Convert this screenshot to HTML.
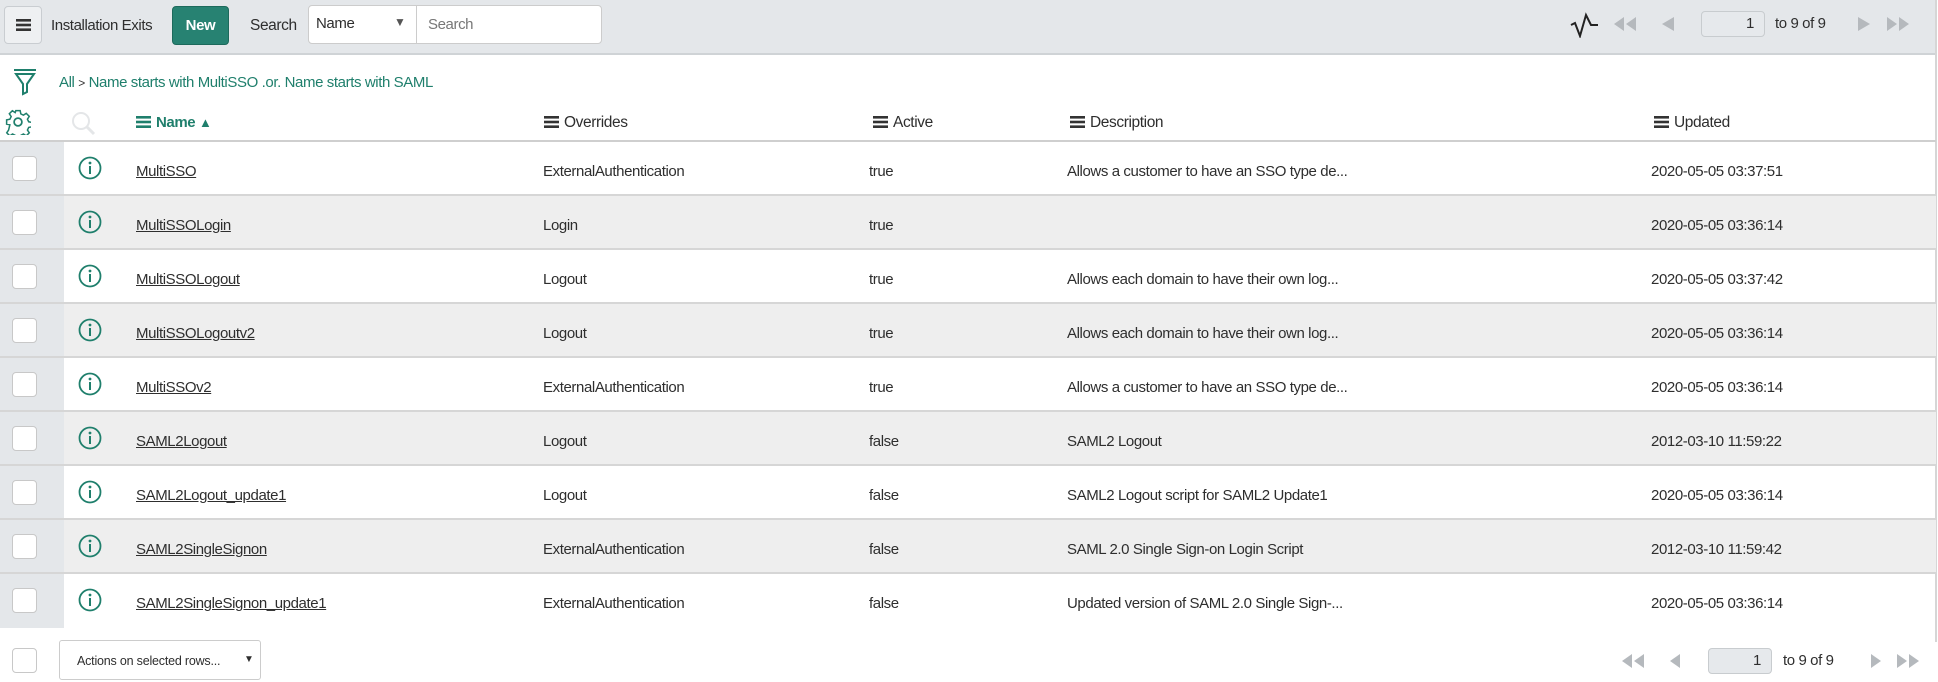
<!DOCTYPE html>
<html><head><meta charset="utf-8"><style>
*{box-sizing:border-box;margin:0;padding:0}
body{width:1938px;height:682px;overflow:hidden;background:#fff;font-family:"Liberation Sans",sans-serif;font-size:15px;letter-spacing:-0.4px;color:#2e2e2e;position:relative}
.a{position:absolute}
.hdr{left:0;top:0;width:1936px;height:55px;background:#e4e7ea;border-bottom:2px solid #cfd3d6}
.btn{border:1px solid #c9cdd1;border-radius:4px;background:#eef0f2}
.hs{display:inline-block;width:15px;height:12px;margin-right:5px;vertical-align:-1px}
.row{left:0;width:1936px;height:54px;border-bottom:2px solid #d6d6d6}
.row.g{background:#eeeeee}
.lc{left:0;top:0;width:64px;height:100%;background:#e4e7ea}
.cb{width:25px;height:25px;background:#fff;border:1px solid #c8c8c8;border-radius:4px}
.info{width:24px;height:24px}
.cell{top:21px;white-space:nowrap}
.lnk{text-decoration:underline;color:#2e2e2e}
.th{top:114px;font-size:15.5px;white-space:nowrap}
</style></head><body>
<svg width="0" height="0" style="position:absolute"><defs>
<symbol id="hb" viewBox="0 0 15 12"><rect x="0" y="0" width="15" height="2.6"/><rect x="0" y="4.7" width="15" height="2.6"/><rect x="0" y="9.4" width="15" height="2.6"/></symbol>
<symbol id="inf" viewBox="0 0 24 24"><circle cx="12" cy="12" r="10.5" fill="none" stroke="#1f7f6c" stroke-width="1.8"/><circle cx="12" cy="7" r="1.4" fill="#1f7f6c"/><rect x="11" y="10" width="2" height="8" fill="#1f7f6c"/></symbol>
</defs></svg>
<div class="a hdr"></div>
<div class="a btn" style="left:4px;top:6px;width:38px;height:38px"><svg class="a" style="left:11px;top:12px;fill:#333" width="15" height="12"><use href="#hb"/></svg></div>
<div class="a" style="left:51px;top:17px;font-size:15px">Installation Exits</div>
<div class="a" style="left:172px;top:6px;width:57px;height:39px;background:#278272;border:1px solid #1d6a5c;border-radius:4px;color:#fff;font-weight:bold;text-align:center;line-height:37px;font-size:15px">New</div>
<div class="a" style="left:250px;top:17px;font-size:15.5px">Search</div>
<div class="a" style="left:308px;top:5px;width:294px;height:39px;background:#fff;border:1px solid #ccc;border-radius:4px"></div>
<div class="a" style="left:416px;top:6px;width:1px;height:37px;background:#ccc"></div>
<div class="a" style="left:316px;top:15px;font-size:15px">Name</div>
<div class="a" style="left:394px;top:15px;font-size:12px;color:#555">▼</div>
<div class="a" style="left:428px;top:16px;font-size:15px;color:#777">Search</div>
<svg class="a" style="left:1570px;top:12px" width="30" height="26" viewBox="0 0 30 26"><path d="M1 13 L5 11 L10 24 L16 3 L21 13 L28 13" fill="none" stroke="#222" stroke-width="2"/></svg>
<svg class="a" style="left:1614px;top:16px" width="32" height="16"><path d="M0 8 L10 1 V15Z M12 8 L22 1 V15Z" fill="#b5b9bd"/></svg>
<svg class="a" style="left:1662px;top:16px" width="14" height="16"><path d="M0 8 L12 1 V15Z" fill="#b5b9bd"/></svg>
<div class="a" style="left:1701px;top:11px;width:64px;height:26px;border:1px solid #c8cccf;border-radius:4px;background:#e6e9ec;text-align:right;padding-right:10px;line-height:24px">1</div>
<div class="a" style="left:1775px;top:15px;font-size:15px">to 9 of 9</div>
<svg class="a" style="left:1857px;top:16px" width="14" height="16"><path d="M13 8 L1 1 V15Z" fill="#b5b9bd"/></svg>
<svg class="a" style="left:1887px;top:16px" width="32" height="16"><path d="M10 8 L0 1 V15Z M22 8 L12 1 V15Z" fill="#b5b9bd"/></svg>
<div class="a" style="left:1935px;top:0;width:2px;height:642px;background:#d6d6d6"></div>

<svg class="a" style="left:13px;top:68px" width="24" height="28" viewBox="0 0 24 28"><path d="M1 2 H23 M3 6 H21 L14 16 V24 L10 26 V16 Z" fill="none" stroke="#1f7f6c" stroke-width="2"/></svg>
<div class="a" style="left:59px;top:74px;color:#1f7f6c;font-size:15px">All <span style="color:#333;font-size:12px">&gt;</span> Name starts with MultiSSO .or. Name starts with SAML</div>

<svg class="a" style="left:5px;top:109px" width="26" height="26" viewBox="0 0 24 24"><circle cx="12" cy="12" r="3.6" fill="none" stroke="#1f7f6c" stroke-width="1.6"/><path d="M10 1.5h4l.6 3 2.4 1.2 2.6-1.7 2.8 2.8-1.7 2.6 1.2 2.4 3 .6v4l-3 .6-1.2 2.4 1.7 2.6-2.8 2.8-2.6-1.7-2.4 1.2-.6 3h-4l-.6-3-2.4-1.2-2.6 1.7-2.8-2.8 1.7-2.6L4.5 14.6 1.5 14v-4l3-.6L5.7 7 4 4.4 6.8 1.6 9.4 3.3 Z" fill="none" stroke="#1f7f6c" stroke-width="1.4"/></svg>
<svg class="a" style="left:70px;top:110px" width="26" height="26"><circle cx="11" cy="11" r="8" fill="none" stroke="#e4e6e8" stroke-width="2"/><path d="M17 17 L24 24" stroke="#e4e6e8" stroke-width="3"/></svg>
<div class="a th" style="left:136px;color:#1f7f6c;font-weight:bold;font-size:15px"><svg class="hs" style="fill:#1f7f6c"><use href="#hb"/></svg>Name <span style="font-size:13px">▲</span></div>
<div class="a th" style="left:544px"><svg class="hs" style="fill:#333"><use href="#hb"/></svg>Overrides</div>
<div class="a th" style="left:873px"><svg class="hs" style="fill:#333"><use href="#hb"/></svg>Active</div>
<div class="a th" style="left:1070px"><svg class="hs" style="fill:#333"><use href="#hb"/></svg>Description</div>
<div class="a th" style="left:1654px"><svg class="hs" style="fill:#333"><use href="#hb"/></svg>Updated</div>
<div class="a" style="left:0;top:140px;width:1936px;height:2px;background:#cfcfcf"></div>

<div class="a row" style="top:142px"><div class="a lc"></div><div class="a cb" style="left:12px;top:14px"></div><svg class="a info" style="left:78px;top:14px"><use href="#inf"/></svg><div class="a cell lnk" style="left:136px">MultiSSO</div><div class="a cell" style="left:543px">ExternalAuthentication</div><div class="a cell" style="left:869px">true</div><div class="a cell" style="left:1067px">Allows a customer to have an SSO type de...</div><div class="a cell" style="left:1651px">2020-05-05 03:37:51</div></div>
<div class="a row g" style="top:196px"><div class="a lc"></div><div class="a cb" style="left:12px;top:14px"></div><svg class="a info" style="left:78px;top:14px"><use href="#inf"/></svg><div class="a cell lnk" style="left:136px">MultiSSOLogin</div><div class="a cell" style="left:543px">Login</div><div class="a cell" style="left:869px">true</div><div class="a cell" style="left:1651px">2020-05-05 03:36:14</div></div>
<div class="a row" style="top:250px"><div class="a lc"></div><div class="a cb" style="left:12px;top:14px"></div><svg class="a info" style="left:78px;top:14px"><use href="#inf"/></svg><div class="a cell lnk" style="left:136px">MultiSSOLogout</div><div class="a cell" style="left:543px">Logout</div><div class="a cell" style="left:869px">true</div><div class="a cell" style="left:1067px">Allows each domain to have their own log...</div><div class="a cell" style="left:1651px">2020-05-05 03:37:42</div></div>
<div class="a row g" style="top:304px"><div class="a lc"></div><div class="a cb" style="left:12px;top:14px"></div><svg class="a info" style="left:78px;top:14px"><use href="#inf"/></svg><div class="a cell lnk" style="left:136px">MultiSSOLogoutv2</div><div class="a cell" style="left:543px">Logout</div><div class="a cell" style="left:869px">true</div><div class="a cell" style="left:1067px">Allows each domain to have their own log...</div><div class="a cell" style="left:1651px">2020-05-05 03:36:14</div></div>
<div class="a row" style="top:358px"><div class="a lc"></div><div class="a cb" style="left:12px;top:14px"></div><svg class="a info" style="left:78px;top:14px"><use href="#inf"/></svg><div class="a cell lnk" style="left:136px">MultiSSOv2</div><div class="a cell" style="left:543px">ExternalAuthentication</div><div class="a cell" style="left:869px">true</div><div class="a cell" style="left:1067px">Allows a customer to have an SSO type de...</div><div class="a cell" style="left:1651px">2020-05-05 03:36:14</div></div>
<div class="a row g" style="top:412px"><div class="a lc"></div><div class="a cb" style="left:12px;top:14px"></div><svg class="a info" style="left:78px;top:14px"><use href="#inf"/></svg><div class="a cell lnk" style="left:136px">SAML2Logout</div><div class="a cell" style="left:543px">Logout</div><div class="a cell" style="left:869px">false</div><div class="a cell" style="left:1067px">SAML2 Logout</div><div class="a cell" style="left:1651px">2012-03-10 11:59:22</div></div>
<div class="a row" style="top:466px"><div class="a lc"></div><div class="a cb" style="left:12px;top:14px"></div><svg class="a info" style="left:78px;top:14px"><use href="#inf"/></svg><div class="a cell lnk" style="left:136px">SAML2Logout_update1</div><div class="a cell" style="left:543px">Logout</div><div class="a cell" style="left:869px">false</div><div class="a cell" style="left:1067px">SAML2 Logout script for SAML2 Update1</div><div class="a cell" style="left:1651px">2020-05-05 03:36:14</div></div>
<div class="a row g" style="top:520px"><div class="a lc"></div><div class="a cb" style="left:12px;top:14px"></div><svg class="a info" style="left:78px;top:14px"><use href="#inf"/></svg><div class="a cell lnk" style="left:136px">SAML2SingleSignon</div><div class="a cell" style="left:543px">ExternalAuthentication</div><div class="a cell" style="left:869px">false</div><div class="a cell" style="left:1067px">SAML 2.0 Single Sign-on Login Script</div><div class="a cell" style="left:1651px">2012-03-10 11:59:42</div></div>
<div class="a row" style="top:574px;border-bottom:none"><div class="a lc"></div><div class="a cb" style="left:12px;top:14px"></div><svg class="a info" style="left:78px;top:14px"><use href="#inf"/></svg><div class="a cell lnk" style="left:136px">SAML2SingleSignon_update1</div><div class="a cell" style="left:543px">ExternalAuthentication</div><div class="a cell" style="left:869px">false</div><div class="a cell" style="left:1067px">Updated version of SAML 2.0 Single Sign-...</div><div class="a cell" style="left:1651px">2020-05-05 03:36:14</div></div>

<div class="a cb" style="left:12px;top:648px"></div>
<div class="a" style="left:59px;top:640px;width:202px;height:40px;border:1px solid #ccc;border-radius:3px;background:#fff"></div>
<div class="a" style="left:77px;top:654px;font-size:12.5px;letter-spacing:-0.2px">Actions on selected rows...</div>
<div class="a" style="left:244px;top:654px;font-size:10px">▼</div>
<svg class="a" style="left:1622px;top:653px" width="32" height="16"><path d="M0 8 L10 1 V15Z M12 8 L22 1 V15Z" fill="#b5b9bd"/></svg>
<svg class="a" style="left:1670px;top:653px" width="14" height="16"><path d="M0 8 L10 1 V15Z" fill="#b5b9bd"/></svg>
<div class="a" style="left:1708px;top:648px;width:64px;height:26px;border:1px solid #c8cccf;border-radius:4px;background:#e6e9ec;text-align:right;padding-right:10px;line-height:24px">1</div>
<div class="a" style="left:1783px;top:652px;font-size:15px">to 9 of 9</div>
<svg class="a" style="left:1871px;top:653px" width="14" height="16"><path d="M10 8 L0 1 V15Z" fill="#b5b9bd"/></svg>
<svg class="a" style="left:1897px;top:653px" width="32" height="16"><path d="M10 8 L0 1 V15Z M22 8 L12 1 V15Z" fill="#b5b9bd"/></svg>
</body></html>
